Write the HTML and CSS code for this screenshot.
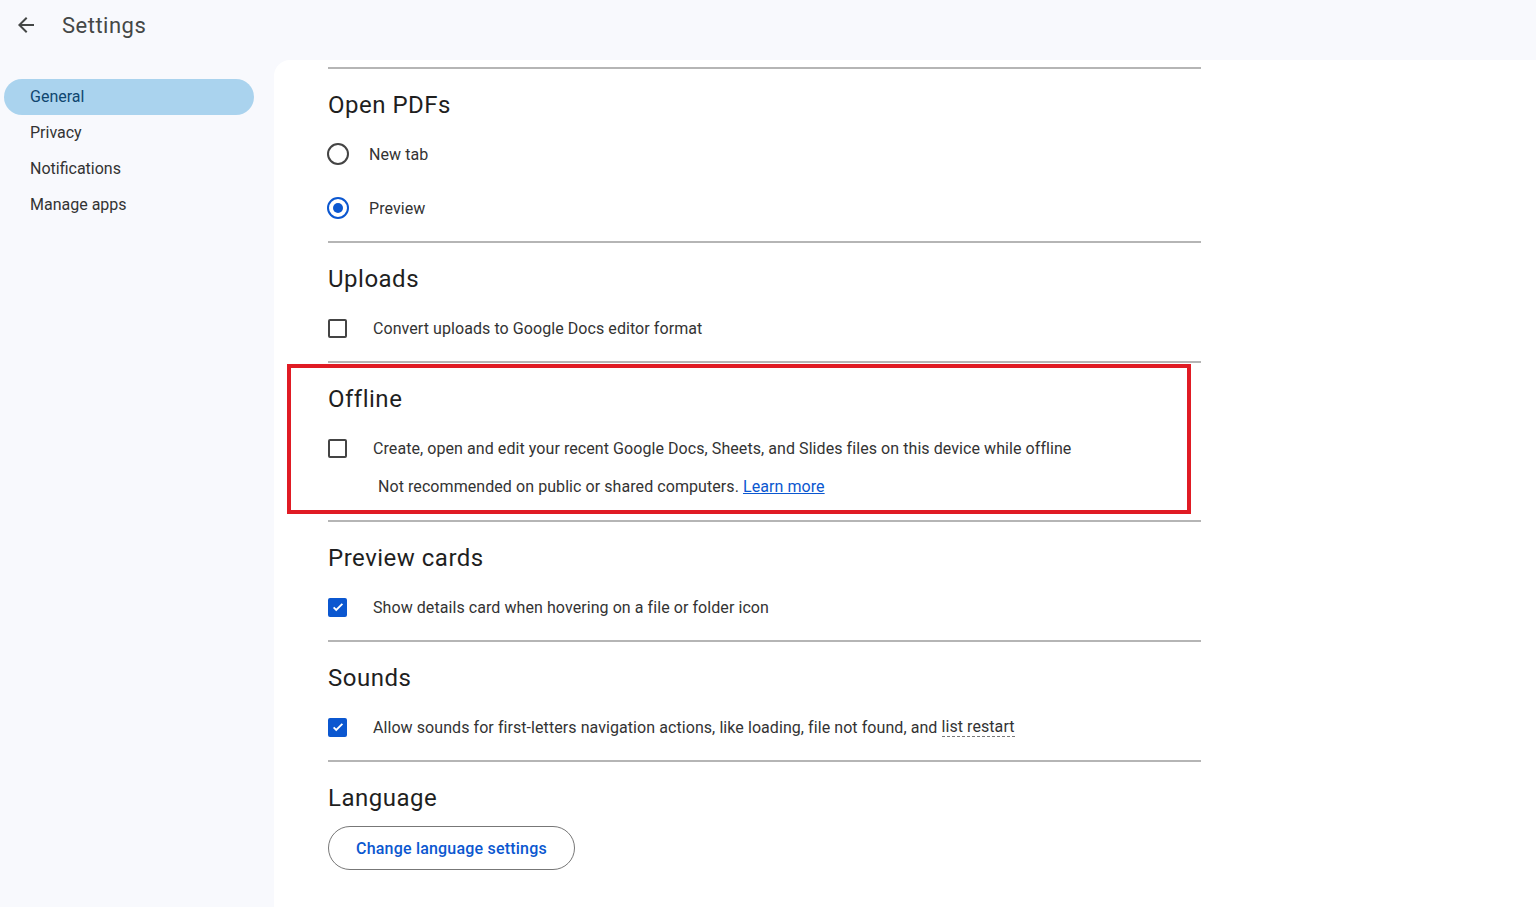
FILE: index.html
```html
<!DOCTYPE html>
<html lang="en">
<head>
    <meta charset="utf-8">
    <meta name="viewport" content="width=device-width, initial-scale=1.0">
    <title>Settings</title>
    <link rel="stylesheet" href="styles.css">
</head>
<body>
    <div id="header">
        <span class="back">
            <svg width="24" height="24" viewBox="0 0 24 24"><path d="M20 11H7.83l5.59-5.59L12 4l-8 8 8 8 1.41-1.41L7.83 13H20v-2z" fill="#444746"/></svg>
        </span>
        <h1>Settings</h1>
    </div>
    <div id="page">
        <ul id="nav">
            <li class="active">General</li>
            <li>Privacy</li>
            <li>Notifications</li>
            <li>Manage apps</li>
        </ul>
        <div id="panel">
            <div class="section">
                <h2>Open PDFs</h2>
                <div class="row radio-row"><span class="radio"></span>New tab</div>
                <div class="row radio-row gap"><span class="radio on"></span>Preview</div>
            </div>
            <div class="section">
                <h2>Uploads</h2>
                <div class="row"><span class="check"></span>Convert uploads to Google Docs editor format</div>
            </div>
            <div class="section">
                <div class="mark">
                    <h2>Offline</h2>
                    <div class="row"><span class="check"></span>Create, open and edit your recent Google Docs, Sheets, and Slides files on this device while offline</div>
                    <p class="note">Not recommended on public or shared computers. <a href="#">Learn more</a></p>
                </div>
            </div>
            <div class="section">
                <h2>Preview cards</h2>
                <div class="row"><span class="check on"><svg width="14" height="14" viewBox="0 0 24 24"><path d="M4.5 12.5l4.5 4.5 10.5-10.5" fill="none" stroke="#fff" stroke-width="3.2"/></svg></span>Show details card when hovering on a file or folder icon</div>
            </div>
            <div class="section">
                <h2>Sounds</h2>
                <div class="row"><span class="check on"><svg width="14" height="14" viewBox="0 0 24 24"><path d="M4.5 12.5l4.5 4.5 10.5-10.5" fill="none" stroke="#fff" stroke-width="3.2"/></svg></span>Allow sounds for first-letters navigation actions, like loading, file not found, and&nbsp;<span class="dotted">list restart</span></div>
            </div>
            <div class="section">
                <h2>Language</h2>
                <button class="btn">Change language settings</button>
            </div>
        </div>
    </div>
</body>
</html>
```

FILE: styles.css
```css
* {
    margin: 0;
    padding: 0;
    box-sizing: border-box;
}
body {
    background-color: #f8f9fd;
    font-family: Roboto, "Liberation Sans", sans-serif;
    color: #333;
    font-size: 16px;
}
#header {
    height: 60px;
    display: flex;
    align-items: flex-start;
    padding-top: 13px;
}
.back {
    width: 24px;
    height: 24px;
    margin-left: 14px;
}
#header h1 {
    font-size: 22px;
    font-weight: 400;
    color: #444746;
    margin-left: 24px;
    line-height: 26px;
    letter-spacing: 0.5px;
}
#page {
    display: flex;
    align-items: stretch;
    min-height: calc(100vh - 60px);
}
#nav {
    width: 274px;
    flex: none;
    list-style: none;
    padding: 19px 20px 0 4px;
}
#nav li {
    height: 36px;
    line-height: 36px;
    padding-left: 26px;
    color: #333;
    border-radius: 18px;
}
#nav li.active {
    background-color: #aad3ee;
    color: #0f4670;
}
#panel {
    flex: 1;
    background-color: #fff;
    border-top-left-radius: 16px;
    padding: 7px 0 40px 54px;
}
.section {
    width: 873px;
    border-top: 2px solid #b5b5b5;
    padding: 20px 0 13px;
}
.section h2 {
    font-size: 24px;
    font-weight: 400;
    line-height: 32px;
    color: #1f1f1f;
    margin-bottom: 13px;
    letter-spacing: 0.5px;
}
.row {
    height: 40px;
    display: flex;
    align-items: center;
    color: #333;
    letter-spacing: 0.07px;
}
.row.gap {
    margin-top: 14px;
}
.radio {
    width: 22px;
    height: 22px;
    border: 2px solid #444;
    border-radius: 50%;
    margin: 0 20px 0 -1px;
    display: flex;
    align-items: center;
    justify-content: center;
}
.radio.on {
    border-color: #0b57d0;
}
.radio.on::after {
    content: "";
    width: 10px;
    height: 10px;
    border-radius: 50%;
    background-color: #0b57d0;
}
.check {
    width: 19px;
    height: 19px;
    border: 2px solid #444;
    border-radius: 2px;
    margin-right: 26px;
    display: flex;
    align-items: center;
    justify-content: center;
}
.check.on {
    background-color: #0b57d0;
    border-color: #0b57d0;
}
.dotted {
    border-bottom: 1px dashed #777;
    line-height: 18px;
}
.mark {
    margin: -19px 10px 0 -41px;
    border: 4px solid #e01b24;
    padding: 15px 0 13px 37px;
}
.section:has(.mark) {
    padding-bottom: 6px;
}
.note {
    margin-top: 9px;
    line-height: 20px;
    padding-left: 50px;
    color: #333;
    letter-spacing: 0.07px;
}
.note a {
    color: #0b57d0;
}
.btn {
    margin-top: -1px;
    height: 44px;
    padding: 0 27px;
    border: 1px solid #777;
    border-radius: 22px;
    background: #fff;
    color: #0b57d0;
    font-family: Roboto, "Liberation Sans", sans-serif;
    font-size: 16px;
    font-weight: 500;
    letter-spacing: 0.2px;
}
```
